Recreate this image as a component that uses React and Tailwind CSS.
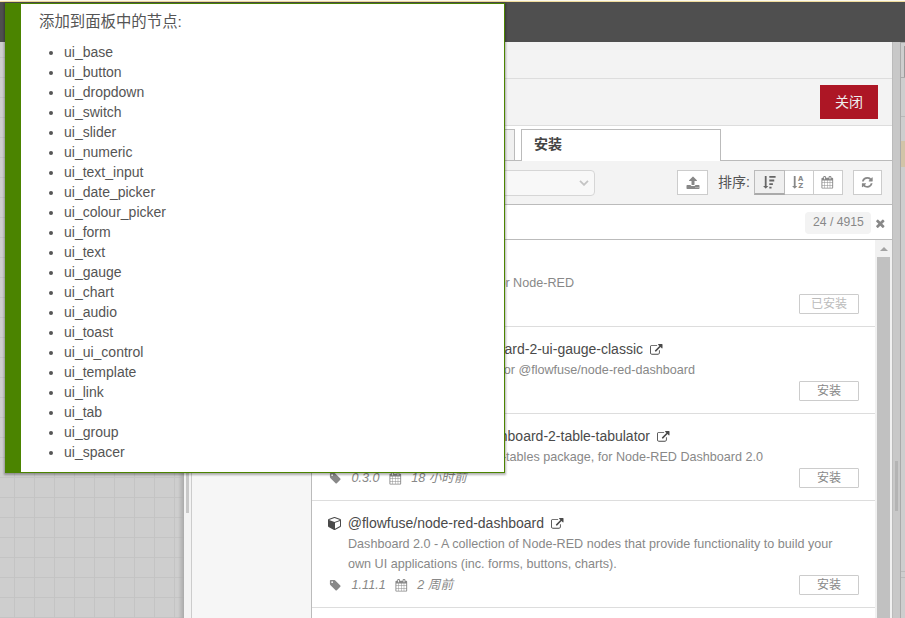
import { useState } from 'react';
import clsx from 'clsx';

const ICONS = {
  external:
    'M1408 928v320q0 119-84.5 203.5t-203.5 84.5h-832q-119 0-203.5-84.5t-84.5-203.5v-832q0-119 84.5-203.5t203.5-84.5h704q14 0 23 9t9 23v64q0 14-9 23t-23 9h-704q-66 0-113 47t-47 113v832q0 66 47 113t113 47h832q66 0 113-47t47-113v-320q0-14 9-23t23-9h64q14 0 23 9t9 23zm384-864v512q0 26-19 45t-45 19-45-19l-176-176-652 652q-10 10-23 10t-23-10l-114-114q-10-10-10-23t10-23l652-652-176-176q-19-19-19-45t19-45 45-19h512q26 0 45 19t19 45z',
  refresh:
    'M1639 1056q0 5-1 7-64 268-268 434.5t-478 166.5q-146 0-282.5-55t-243.5-157l-129 129q-19 19-45 19t-45-19-19-45v-448q0-26 19-45t45-19h448q26 0 45 19t19 45-19 45l-137 137q71 66 161 102t187 36q134 0 250-65t186-179q11-17 53-117 8-23 30-23h192q13 0 22.5 9.5t9.5 22.5zm25-800v448q0 26-19 45t-45 19h-448q-26 0-45-19t-19-45 19-45l138-138q-148-137-349-137-134 0-250 65t-186 179q-11 17-53 117-8 23-30 23h-199q-13 0-22.5-9.5t-9.5-22.5v-7q65-268 270-434.5t480-166.5q146 0 284 55.5t245 156.5l130-129q19-19 45-19t45 19 19 45z',
  calendar:
    'M192 1664h288v-288h-288v288zm352 0h320v-288h-320v288zm-352-352h288v-320h-288v320zm352 0h320v-320h-320v320zm-352-384h288v-288h-288v288zm736 736h320v-288h-320v288zm-384-736h320v-288h-320v288zm768 736h288v-288h-288v288zm-384-352h320v-320h-320v320zm-352-864v-288q0-13-9.5-22.5t-22.5-9.5h-64q-13 0-22.5 9.5t-9.5 22.5v288q0 13 9.5 22.5t22.5 9.5h64q13 0 22.5-9.5t9.5-22.5zm736 864h288v-320h-288v320zm-384-384h320v-288h-320v288zm384 0h288v-288h-288v288zm32-480v-288q0-13-9.5-22.5t-22.5-9.5h-64q-13 0-22.5 9.5t-9.5 22.5v288q0 13 9.5 22.5t22.5 9.5h64q13 0 22.5-9.5t9.5-22.5zm384-64v1280q0 52-38 90t-90 38h-1408q-52 0-90-38t-38-90v-1280q0-52 38-90t90-38h128v-96q0-66 47-113t113-47h64q66 0 113 47t47 113v96h384v-96q0-66 47-113t113-47h64q66 0 113 47t47 113v96h128q52 0 90 38t38 90z',
  upload:
    'M1344 1472q0-26-19-45t-45-19-45 19-19 45 19 45 45 19 45-19 19-45zm256 0q0-26-19-45t-45-19-45 19-19 45 19 45 45 19 45-19 19-45zm128-224v320q0 40-28 68t-68 28h-1472q-40 0-68-28t-28-68v-320q0-40 28-68t68-28h427q21 56 70.5 92t110.5 36h256q61 0 110.5-36t70.5-92h427q40 0 68 28t28 68zm-325-648q-17 40-59 40h-256v448q0 26-19 45t-45 19h-256q-26 0-45-19t-19-45v-448h-256q-42 0-59-40-17-39 14-69l448-448q18-19 45-19t45 19l448 448q31 30 14 69z',
  times:
    'M1490 1322q0 40-28 68l-136 136q-28 28-68 28t-68-28l-294-294-294 294q-28 28-68 28t-68-28l-136-136q-28-28-28-68t28-68l294-294-294-294q-28-28-28-68t28-68l136-136q28-28 68-28t68 28l294 294 294-294q28-28 68-28t68 28l136 136q28 28 28 68t-28 68l-294 294 294 294q28 28 28 68z',
  tag: 'M576 448q0-53-37.5-90.5t-90.5-37.5-90.5 37.5-37.5 90.5 37.5 90.5 90.5 37.5 90.5-37.5 37.5-90.5zm1067 576q0 53-37 90l-491 492q-39 37-91 37-53 0-90-37l-715-716q-38-37-64.5-101t-26.5-117v-416q0-52 38-90t90-38h416q53 0 117 26.5t102 64.5l715 714q37 39 37 91z',
  cube: 'M896 1629l640-349v-636l-640 233v752zm-64-865l698-254-698-254-698 254zm832-252v768q0 35-18 65t-49 47l-704 384q-28 16-61 16t-61-16l-704-384q-31-17-49-47t-18-65v-768q0-40 23-73t61-47l704-256q22-8 44-8t44 8l704 256q38 14 61 47t23 73z',
  amount:
    'M736 1440q0 12-10 24l-319 319q-10 9-23 9-12 0-23-9l-320-320q-15-16-7-35 8-20 30-20h192v-1376q0-14 9-23t23-9h192q14 0 23 9t9 23v1376h192q14 0 23 9t9 23zM896 0h896v256h-896zM896 512h704v256h-704zM896 1024h512v256h-512zM896 1536h320v256h-320z',
  arrow:
    'M736 1440q0 12-10 24l-319 319q-10 9-23 9-12 0-23-9l-320-320q-15-16-7-35 8-20 30-20h192v-1376q0-14 9-23t23-9h192q14 0 23 9t9 23v1376h192q14 0 23 9t9 23z',
};

function Icon({ name, className = 'size-3.5', children }) {
  return (
    <svg viewBox="0 0 1792 1792" fill="currentColor" className={clsx('shrink-0 overflow-visible', className)}>
      <path d={ICONS[name]} />
      {children}
    </svg>
  );
}

const addedNodes = [
  'ui_base', 'ui_button', 'ui_dropdown', 'ui_switch', 'ui_slider', 'ui_numeric', 'ui_text_input',
  'ui_date_picker', 'ui_colour_picker', 'ui_form', 'ui_text', 'ui_gauge', 'ui_chart', 'ui_audio',
  'ui_toast', 'ui_ui_control', 'ui_template', 'ui_link', 'ui_tab', 'ui_group', 'ui_spacer',
];

const modules = [
  {
    name: 'node-red-dashboard',
    nameWidth: 124,
    desc: 'A set of dashboard nodes for Node-RED',
    descWidth: 226,
    version: '3.6.5',
    updated: '3 月前',
    installed: true,
  },
  {
    name: 'node-red-dashboard-2-ui-gauge-classic',
    nameWidth: 295,
    desc: 'Classic gauge for @flowfuse/node-red-dashboard',
    descWidth: 347,
    version: '0.1.0',
    updated: '1 周前',
  },
  {
    name: 'node-red-dashboard-2-table-tabulator',
    nameWidth: 302,
    desc: 'Based on the tabulator-tables package, for Node-RED Dashboard 2.0',
    descWidth: 415,
    version: '0.3.0',
    updated: '18 小时前',
  },
  {
    name: '@flowfuse/node-red-dashboard',
    nameWidth: 196,
    desc: 'Dashboard 2.0 - A collection of Node-RED nodes that provide functionality to build your own UI applications (inc. forms, buttons, charts).',
    descWidth: 495,
    wrap: true,
    version: '1.11.1',
    updated: '2 周前',
  },
];

function ModuleRow({ item }) {
  return (
    <div className="border-b border-[#ddd] pt-3 pb-3 pl-4 pr-4">
      <div className="flex h-5 items-center text-[14px] text-[#4a4a4a]">
        <Icon name="cube" className="mr-1.5 size-3.5" />
        <span className="flex justify-end whitespace-nowrap" style={{ width: item.nameWidth }}>
          {item.name}
        </span>
        <Icon name="external" className="mt-0.5 ml-[7px] size-[12.5px]" />
      </div>
      <div
        className={clsx('ml-5 pt-px text-[12.6px] leading-5 text-[#888]', !item.wrap && 'flex justify-end whitespace-nowrap')}
        style={{ width: item.descWidth }}
      >
        {item.desc}
      </div>
      <div className="flex h-[21px] items-center text-[12.6px] whitespace-nowrap text-[#888]">
        <Icon name="tag" className="mt-px ml-px size-[12.6px]" />
        <span className="mt-0.5 ml-[10px] italic">{item.version}</span>
        <Icon name="calendar" className="mt-px ml-[9.5px] size-[12.6px]" />
        <span className="mt-0.5 ml-[9.5px] italic">{item.updated}</span>
        <button
          className={clsx(
            'ml-auto mt-px h-5 w-[60px] rounded-[1px] border border-[#ccc] text-[12px] leading-[18px]',
            item.installed ? 'text-[#bbb]' : 'text-[#888]'
          )}
        >
          {item.installed ? '已安装' : '安装'}
        </button>
      </div>
    </div>
  );
}

function SortButton({ active, className, children, onClick }) {
  return (
    <button
      onClick={onClick}
      className={clsx(
        'flex h-[25px] items-center justify-center border',
        active ? 'z-1 border-[#bbb] border-b-2 border-b-[#aaa] bg-[#efefef] text-[#666]' : 'border-[#ccc] bg-white text-[#888]',
        className
      )}
    >
      {children}
    </button>
  );
}

function Toolbar({ sort, setSort }) {
  return (
    <div className="flex h-11 shrink-0 items-center border-b border-[#bbb] bg-[#f3f3f3] pr-[10px]">
      <div className="flex h-[26px] w-[283px] items-center justify-end rounded-[4px] border border-[#d6d6d6] bg-[#f8f8f8] pr-[5px]">
        <svg viewBox="0 0 10 6" className="h-1.5 w-2.5" fill="none" stroke="#c4c4c4" strokeWidth="1.8">
          <path d="M1 .8l4 4 4-4" />
        </svg>
      </div>
      <SortButton className="ml-auto w-[31px]">
        <Icon name="upload" />
      </SortButton>
      <span className="ml-[10px] w-9 whitespace-nowrap text-[14px] text-[#555]">排序:</span>
      <SortButton className="w-[31px]" active={sort === 'relevance'} onClick={() => setSort('relevance')}>
        <Icon name="amount" className="mt-px mr-px size-[12.6px]" />
      </SortButton>
      <SortButton className="-ml-px w-[30px] pr-0.5" active={sort === 'az'} onClick={() => setSort('az')}>
        <Icon name="arrow" className="size-[12.6px]">
          <text x="870" y="740" fontSize="980" fontWeight="bold" fontFamily="DejaVu Sans, sans-serif">A</text>
          <text x="890" y="1770" fontSize="980" fontWeight="bold" fontFamily="DejaVu Sans, sans-serif">Z</text>
        </Icon>
      </SortButton>
      <SortButton className="-ml-px w-[30px] pr-0.5" active={sort === 'recent'} onClick={() => setSort('recent')}>
        <Icon name="calendar" className="size-[12.6px]" />
      </SortButton>
      <SortButton className="ml-[10px] w-[29px]">
        <Icon name="refresh" className="mr-px size-[12.6px]" />
      </SortButton>
    </div>
  );
}

function Settings() {
  const [sort, setSort] = useState('relevance');
  return (
    <div className="flex min-w-0 flex-1 flex-col border-r border-[#bbb] bg-white">
      <div className="h-[37px] shrink-0 border-b border-[#ddd] bg-[#f3f3f3]" />
      <div className="flex h-[47px] shrink-0 items-center justify-end border-b border-[#ddd] bg-[#f3f3f3] pr-[14px]">
        <button className="h-[34px] w-[58px] bg-[#ad1625] text-[14px] text-[#eee]">关闭</button>
      </div>
      <div className="flex min-h-0 flex-1">
        <div className="w-[120px] shrink-0 border-r border-[#bbb] bg-[#f6f6f6]" />
        <div className="flex min-w-0 flex-1 flex-col">
          <div className="flex h-[35px] shrink-0 items-end">
            <div className="h-full w-[3px] border-b border-[#bbb]" />
            <div className="h-8 w-[200px] border border-[#bbb] bg-[#f0f0f0]" />
            <div className="h-full w-1.5 border-b border-[#bbb]" />
            <div className="h-8 w-[200px] border border-b-0 border-[#bbb] bg-white pl-3 text-[14px] leading-[29px] font-bold text-[#444]">
              安装
            </div>
            <div className="h-full flex-1 border-b border-[#bbb]" />
          </div>
          <Toolbar sort={sort} setSort={setSort} />
          <div className="flex h-[35px] shrink-0 items-center justify-end border-b border-[#bbb] pr-[5px]">
            <span className="mt-px flex h-[22px] w-[66px] items-center justify-center rounded-[4px] bg-[#f3f3f3] text-[12.2px] text-[#888]">
              24 / 4915
            </span>
            <Icon name="times" className="mt-0.5 ml-[3px] size-[12.6px] text-[#888]" />
          </div>
          <div className="flex min-h-0 flex-1">
            <div className="flex-1 overflow-hidden">
              {modules.map((item) => (
                <ModuleRow key={item.name} item={item} />
              ))}
            </div>
            <div className="flex w-[17px] shrink-0 flex-col items-center bg-[#f1f1f1]">
              <div className="flex h-[17px] items-center">
                <svg viewBox="0 0 8 4" className="h-1 w-2" fill="#a3a3a3">
                  <path d="M0 4l4-4 4 4z" />
                </svg>
              </div>
              <div className="w-[13px] flex-1 bg-[#c1c1c1]" />
            </div>
          </div>
        </div>
      </div>
    </div>
  );
}

function Notification() {
  return (
    <div className="absolute top-[3px] left-[5px] h-[470px] w-[500px] border border-l-16 border-[#4b8400] bg-white pt-2 pl-[18px] text-[14px] leading-5 text-[#555] shadow-[0_1px_2px_1px_rgba(0,0,0,0.3)]">
      <p className="text-[15.4px]">添加到面板中的节点:</p>
      <ul className="mt-[10px] list-disc pl-[25px]">
        {addedNodes.map((node) => (
          <li key={node}>{node}</li>
        ))}
      </ul>
    </div>
  );
}

export default function App() {
  return (
    <div className="relative flex h-[618px] w-[905px] flex-col overflow-hidden bg-[#cecece] font-['Liberation_Sans','Noto_Sans_CJK_SC',sans-serif]">
      <div className="h-0.5 shrink-0 border-b border-[#f0dc9c] bg-[#fbf8ec]" />
      <div className="h-10 shrink-0 bg-[#4f4f4f]" />
      <div className="flex min-h-0 flex-1">
        {/* workspace */}
        <div className="w-[184px] shrink-0 bg-[#cecece] bg-[linear-gradient(to_right,#c4c4c4_1px,transparent_1px),linear-gradient(to_bottom,#c4c4c4_1px,transparent_1px)] bg-size-[20px_20px] bg-position-[14px_15px]">
          <div className="ml-auto h-full w-1.5 bg-linear-to-r from-transparent to-[#aaa]" />
        </div>
        {/* tray resize handle */}
        <div className="w-2 shrink-0 border-r border-[#ccc] bg-[#f3f3f3] pt-[380px]">
          <div className="ml-0.5 h-[91px] w-[3px] bg-[#c8c8c8]" />
        </div>
        <Settings />
        {/* sidebar edge */}
        <div className="w-2 shrink-0 border-r border-[#aaa] bg-[#c8c8c8] pt-[419px]">
          <div className="ml-0.5 h-[50px] w-[3px] bg-[#b4b4b4]" />
        </div>
        <div className="flex w-1 shrink-0 flex-col bg-[#cecece]">
          <div className="flex h-9 justify-end border-y border-[#aaa] pt-[3px]">
            <div className="w-px bg-[#999]" />
          </div>
          <div className="h-[39px] border-b border-[#b8b8b8]" />
          <div className="mt-6 h-[26px] bg-[#d2c4a8]" />
          <div className="mt-[404px] h-[7px] border-y border-[#bbb]" />
        </div>
      </div>
      <Notification />
    </div>
  );
}
